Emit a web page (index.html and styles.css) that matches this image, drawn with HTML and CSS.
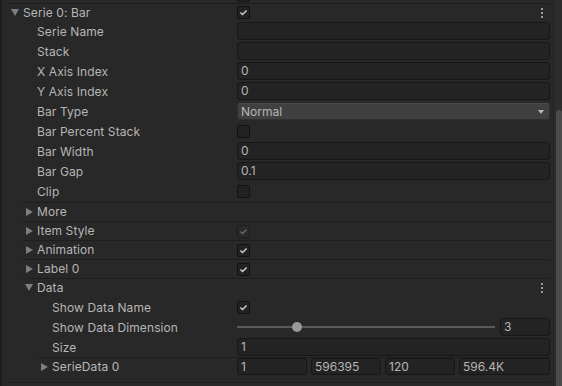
FILE: index.html
```html
<!DOCTYPE html>
<html lang="en">
<head>
<meta charset="UTF-8">
<title>Serie Inspector</title>
<link rel="stylesheet" href="styles.css">
</head>
<body>
<div class="inspector">
    <div class="panel">
        <!-- bottom edge of the previous serie, scrolled out of view -->
        <div class="cut-row">
            <span class="check cut"></span>
        </div>

        <div class="row fold top">
            <div class="label"><span class="arrow open"></span>Serie 0: Bar</div>
            <div class="value">
                <span class="check on high"><svg viewBox="0 0 11 11"><path d="M2.4 5.6 L4.5 7.6 L8.6 3.4"/></svg></span>
                <span class="kebab"><i></i><i></i><i></i></span>
            </div>
        </div>

        <div class="row l1"><div class="label">Serie Name</div><div class="value"><div class="field"></div></div></div>
        <div class="row l1"><div class="label">Stack</div><div class="value"><div class="field"></div></div></div>
        <div class="row l1"><div class="label">X Axis Index</div><div class="value"><div class="field">0</div></div></div>
        <div class="row l1"><div class="label">Y Axis Index</div><div class="value"><div class="field">0</div></div></div>
        <div class="row l1">
            <div class="label">Bar Type</div>
            <div class="value"><div class="dropdown"><span>Normal</span><span class="caret"></span></div></div>
        </div>
        <div class="row l1"><div class="label">Bar Percent Stack</div><div class="value"><span class="check"></span></div></div>
        <div class="row l1"><div class="label">Bar Width</div><div class="value"><div class="field">0</div></div></div>
        <div class="row l1"><div class="label">Bar Gap</div><div class="value"><div class="field">0.1</div></div></div>
        <div class="row l1"><div class="label">Clip</div><div class="value"><span class="check"></span></div></div>

        <div class="row fold l1 first"><div class="label"><span class="arrow"></span>More</div><div class="value"></div></div>
        <div class="row fold l1">
            <div class="label"><span class="arrow"></span>Item Style</div>
            <div class="value"><span class="check on off"><svg viewBox="0 0 11 11"><path d="M2.4 5.6 L4.5 7.6 L8.6 3.4"/></svg></span></div>
        </div>
        <div class="row fold l1">
            <div class="label"><span class="arrow"></span>Animation</div>
            <div class="value"><span class="check on"><svg viewBox="0 0 11 11"><path d="M2.4 5.6 L4.5 7.6 L8.6 3.4"/></svg></span></div>
        </div>
        <div class="row fold l1">
            <div class="label"><span class="arrow"></span>Label 0</div>
            <div class="value"><span class="check on"><svg viewBox="0 0 11 11"><path d="M2.4 5.6 L4.5 7.6 L8.6 3.4"/></svg></span></div>
        </div>
        <div class="row fold l1">
            <div class="label"><span class="arrow open"></span>Data</div>
            <div class="value"><span class="kebab"><i></i><i></i><i></i></span></div>
        </div>

        <div class="row l2">
            <div class="label">Show Data Name</div>
            <div class="value"><span class="check on"><svg viewBox="0 0 11 11"><path d="M2.4 5.6 L4.5 7.6 L8.6 3.4"/></svg></span></div>
        </div>
        <div class="row l2">
            <div class="label">Show Data Dimension</div>
            <div class="value">
                <div class="slider"><span class="knob" style="left: 55px"></span></div>
                <div class="field small">3</div>
            </div>
        </div>
        <div class="row l2"><div class="label">Size</div><div class="value"><div class="field">1</div></div></div>

        <div class="row fold l2 data-row">
            <div class="label"><span class="arrow"></span>SerieData 0</div>
            <div class="value cells">
                <div class="field">1</div>
                <div class="field">596395</div>
                <div class="field">120</div>
                <div class="field">596.4K</div>
            </div>
        </div>

        <div class="row fold top next">
            <div class="label"></div>
            <div class="value"><span class="check"></span></div>
        </div>
    </div>
    <div class="scrollbar"><div class="thumb"></div></div>
</div>
</body>
</html>
```

FILE: styles.css
```css
body {
    margin: 0;
    background-color: #282828;
    font-family: Inter, "Noto Sans", sans-serif;
    font-size: 12px;
    color: #b6b6b6;
}

.inspector {
    display: flex;
    height: 386px;
    overflow: hidden;
    border-left: 2px solid #1d1d1d;
}

.panel {
    flex: 1;
    padding: 0 3px 0 6px;
    overflow: hidden;
}

.cut-row {
    height: 3px;
    overflow: hidden;
    padding-left: 229px;
}

.row {
    display: flex;
    align-items: center;
    height: 20px;
}

.label {
    flex: 0 0 229px;
    box-sizing: border-box;
    white-space: nowrap;
    display: flex;
    align-items: center;
    letter-spacing: 0.1px;
}

.value {
    flex: 1;
    display: flex;
    align-items: center;
    min-width: 0;
}

.l1 .label {
    padding-left: 29px;
}

.l2 .label {
    padding-left: 44px;
}

/* foldout headers */
.row.fold {
    height: 18px;
    border-top: 1px solid #1e1e1e;
}

.row.fold .label {
    padding-left: 0;
    margin-top: -1px;
}

.row.fold.top {
    height: 17px;
}

.row.fold.l1 {
    margin-left: 14px;
}

.row.fold.l1 .label {
    flex-basis: 215px;
}

.row.fold.l2 {
    margin-left: 29px;
}

.row.fold.l2 .label {
    flex-basis: 200px;
    margin-top: 0;
}

.row.fold.first {
    margin-top: 1px;
}

.row.data-row {
    height: 17px;
    margin-bottom: 7px;
}

.arrow {
    flex: none;
    width: 15px;
    height: 10px;
    box-sizing: border-box;
    padding-left: 4px;
    display: flex;
    align-items: center;
}

.arrow::before {
    content: "";
    border-left: 7px solid #7e7e7e;
    border-top: 4.5px solid transparent;
    border-bottom: 4.5px solid transparent;
}

.arrow.open {
    padding-left: 3px;
}

.arrow.open::before {
    border-top: 7px solid #7e7e7e;
    border-left: 4px solid transparent;
    border-right: 4px solid transparent;
    border-bottom: 0;
}

/* fields */
.field {
    flex: 1;
    height: 18px;
    box-sizing: border-box;
    border: 1px solid #171717;
    border-radius: 3px;
    background-color: #232323;
    padding-left: 3px;
    line-height: 16px;
    white-space: nowrap;
    overflow: hidden;
}

.field.small {
    flex: 0 0 50px;
    margin-left: 5px;
}

.cells {
    display: grid;
    grid-template-columns: 70px 70px 70px 1fr;
    gap: 4px;
    align-self: center;
}

.cells .field {
    height: 17px;
    line-height: 15px;
}

.dropdown {
    flex: 1;
    height: 17px;
    box-sizing: border-box;
    margin-top: 1px;
    border: 1px solid #303030;
    border-top-color: #4a4a4a;
    border-radius: 3px;
    background-color: #404040;
    padding: 0 5px 0 3px;
    display: flex;
    align-items: center;
    justify-content: space-between;
    line-height: 15px;
}

.caret {
    border-top: 4px solid #b8b8b8;
    border-left: 3.5px solid transparent;
    border-right: 3.5px solid transparent;
}

/* checkbox */
.check {
    flex: none;
    width: 13px;
    height: 13px;
    box-sizing: border-box;
    border: 1px solid #121212;
    border-radius: 2px;
    background-color: #222222;
    display: flex;
}

.check svg {
    width: 11px;
    height: 11px;
}

.check path {
    fill: none;
    stroke: #cfcfcf;
    stroke-width: 1.4;
}

.check.off {
    background-color: #2a2a2a;
    border-color: #1c1c1c;
}

.check.off path {
    stroke: #676767;
}

.check.high {
    align-self: flex-start;
}

.check.cut {
    margin-top: -11px;
}

.row.next .check {
    align-self: flex-start;
    margin-top: 1px;
}

.kebab {
    margin-left: auto;
    margin-right: 7px;
    display: flex;
    flex-direction: column;
    gap: 2px;
}

.kebab i {
    display: block;
    width: 2px;
    height: 2px;
    background-color: #9c9c9c;
}

/* slider */
.slider {
    flex: 1;
    height: 2px;
    background-color: #5b5b5b;
    position: relative;
}

.knob {
    position: absolute;
    top: -4px;
    width: 10px;
    height: 10px;
    border-radius: 50%;
    background-color: #999999;
}

/* scrollbar */
.scrollbar {
    flex: 0 0 9px;
    box-sizing: border-box;
    background-color: #2c2c2c;
    border-left: 1px solid #232323;
    display: flex;
    flex-direction: column;
}

.thumb {
    flex: 1;
    margin: 110px 0 0 2px;
    border-radius: 4px 4px 0 0;
    background-color: #4b4b4b;
}
```
